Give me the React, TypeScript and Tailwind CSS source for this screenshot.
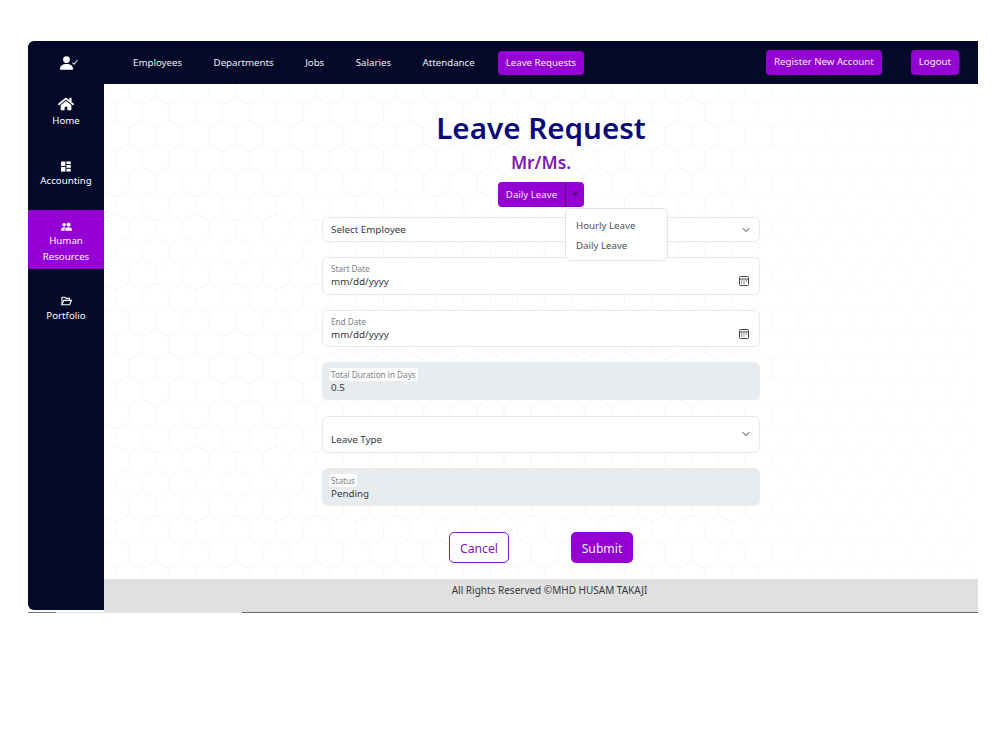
import { ChevronDown } from "lucide-react";
import { BsPeopleFill } from "react-icons/bs";
import { FaHome } from "react-icons/fa";

const TOP_LINKS = ["Employees", "Departments", "Jobs", "Salaries", "Attendance"];

function UserCheckIcon() {
  return (
    <svg width="18" height="14" viewBox="0 0 18 14" fill="white">
      <circle cx="6.5" cy="3.6" r="3.4" />
      <path d="M0 13.2c0-3.6 2.6-5.2 6.5-5.2s6.5 1.6 6.5 5.2c0 .4-.3.6-.7.6H.7c-.4 0-.7-.2-.7-.6Z" />
      <path d="M12.5 6.6l1.6 1.5L17.5 4" fill="none" stroke="#e4e5ec" strokeWidth="1.1" />
    </svg>
  );
}

function AccountingIcon() {
  return (
    <svg width="10" height="11" viewBox="0 0 10 11" fill="white">
      <rect x="0" y="0.5" width="4.4" height="4.6" />
      <rect x="0" y="6" width="4.4" height="4.6" />
      <rect x="5.4" y="0.5" width="4.4" height="2.6" />
      <rect x="5.4" y="4" width="4.4" height="2.8" />
      <rect x="5.4" y="7.8" width="4.4" height="2.8" />
    </svg>
  );
}

function FolderOpenIcon() {
  return (
    <svg width="11" height="10" viewBox="0 0 11 10" fill="none" stroke="white" strokeWidth="1.1">
      <path d="M1 8.8V1.2h3l1 1.2h3.6v1.8" />
      <path d="M1 8.8h7.6l1.8-4.4H2.8Z" />
    </svg>
  );
}

function CalendarIcon() {
  return (
    <svg width="10" height="10" viewBox="0 0 10 10" fill="none" stroke="#3f4347" strokeWidth="1">
      <rect x="0.5" y="0.5" width="9" height="9" rx="1" />
      <path d="M0.5 3h9" />
      <path d="M2 5h1.2M4.4 5h1.2M6.8 5h1.2M2 7h1.2M4.4 7h1.2" />
    </svg>
  );
}

function HexBackground() {
  return (
    <svg
      className="absolute inset-0 h-full w-full [mask-image:linear-gradient(to_right,black_0%,black_70%,rgba(0,0,0,0.35)_85%,rgba(0,0,0,0.2)_100%)]"
      aria-hidden="true"
    >
      <defs>
        <pattern id="hex" width="26.8" height="46.4" patternUnits="userSpaceOnUse" x="-2" y="-10">
          <path
            d="M0 7.7L13.4 0L26.8 7.7V23.2L13.4 30.9L0 23.2ZM13.4 30.9V46.4"
            fill="none"
            stroke="#f7f7f8"
            strokeWidth="1.2"
          />
        </pattern>
      </defs>
      <rect width="100%" height="100%" fill="url(#hex)" />
    </svg>
  );
}

function DateField({ label, short }: { label: string; short?: boolean }) {
  return (
    <div
      className={`flex items-end justify-between rounded-md border border-[#e6e8eb] bg-white pl-2 pr-[10px] ${short ? "h-[37px] pb-[4px]" : "h-[38px] pb-[5px]"}`}
    >
      <div className="flex flex-col">
        <span className="text-[8.2px] leading-[13px] text-[#7b8087]">{label}</span>
        <span className="text-[9.8px] leading-[14px] text-[#33383d]">mm/dd/yyyy</span>
      </div>
      <div className="mb-[3px]">
        <CalendarIcon />
      </div>
    </div>
  );
}

function ReadonlyField({ label, value }: { label: string; value: string }) {
  return (
    <div className="flex h-[38px] flex-col items-start justify-end rounded-md bg-[#e9ecef] pb-[5px] pl-[7px]">
      <span className="rounded-[3px] bg-white px-[2px] text-[8.2px] leading-[13px] text-[#7b8087]">{label}</span>
      <span className="pl-[2px] text-[9.8px] leading-[14px] text-[#33383d]">{value}</span>
    </div>
  );
}

function SideItem({ icon, label, active }: { icon: React.ReactNode; label: React.ReactNode; active?: boolean }) {
  return (
    <div className={`flex flex-col items-center ${active ? "bg-[#9400d3] pb-[5px] pt-[11px]" : ""}`}>
      {icon}
      <div className={`mt-px text-center text-[9.7px] text-white ${active ? "leading-[15.5px]" : "leading-[16px]"}`}>
        {label}
      </div>
    </div>
  );
}

export default function App() {
  return (
    <div
      className="min-h-[750px] bg-white pl-[28px] pt-[41px]"
      style={{ fontFamily: '"Noto Sans", sans-serif' }}
    >
      <div className="w-[950px]">
        <div className="flex h-[43px] items-center rounded-tl-md bg-[#020929] pt-px text-[9.7px] text-[#f1f1f5]">
          <div className="flex w-[76px] justify-center pl-[6px]">
            <UserCheckIcon />
          </div>
          <nav className="ml-[29px] flex items-center gap-[31.5px]">
            {TOP_LINKS.map((link) => (
              <span key={link}>{link}</span>
            ))}
          </nav>
          <span className="ml-[23px] flex h-[24px] items-center rounded-[4px] bg-[#9400d3] px-2">Leave Requests</span>
          <span className="mb-px ml-auto flex h-[25px] items-center rounded-[4px] bg-[#9400d3] px-2">
            Register New Account
          </span>
          <span className="mb-px ml-[29px] mr-[19px] flex h-[25px] items-center rounded-[4px] bg-[#9400d3] px-2">
            Logout
          </span>
        </div>
        <div className="flex h-[528px]">
          <aside className="mb-[2px] flex w-[76px] flex-col rounded-bl-md bg-[#020929] pt-[12px]">
            <SideItem icon={<FaHome className="text-[16px] text-white" />} label="Home" />
            <div className="h-[32px]" />
            <SideItem icon={<AccountingIcon />} label="Accounting" />
            <div className="h-[21px]" />
            <SideItem
              active
              icon={<BsPeopleFill className="text-[11px] text-white" />}
              label={
                <>
                  Human
                  <br />
                  Resources
                </>
              }
            />
            <div className="h-[26px]" />
            <SideItem
              icon={
                <div className="flex h-[12px] items-center">
                  <FolderOpenIcon />
                </div>
              }
              label="Portfolio"
            />
          </aside>
          <main className="flex flex-1 flex-col">
            <div className="relative flex-1 bg-white">
              <HexBackground />
              <div className="relative flex flex-col items-center pt-[22px]">
                <h1 className="text-[29.6px] font-semibold leading-[44px] text-[#0a0a78]">Leave Request</h1>
                <div className="text-[17.4px] font-semibold leading-[24px] text-[#7d16b4]">Mr/Ms.</div>
                <div className="relative mt-[8px] flex h-[25px] w-[86px] rounded-[4px] bg-[#9400d3] text-[9.7px] text-[#f1f1f5]">
                  <span className="flex flex-1 items-center justify-center pt-[2px]">Daily Leave</span>
                  <span className="flex w-[19px] items-center justify-center border-l border-[#5a0a80]">
                    <span className="border-x-[3px] border-t-[3px] border-x-transparent border-t-[#3a0a60]" />
                  </span>
                  <div className="absolute left-[67px] top-[26px] z-10 flex h-[53px] w-[103px] flex-col justify-center gap-[4px] rounded-md border border-[#e3e4e8] bg-white pl-[10px] pt-[3px] text-[#4a4f55]">
                    <span className="leading-[16px]">Hourly Leave</span>
                    <span className="leading-[16px]">Daily Leave</span>
                  </div>
                </div>
                <form className="mt-[10px] flex w-[438px] flex-col gap-[15px]">
                  <div className="flex h-[25px] items-center justify-between rounded-md border border-[#e6e8eb] bg-white pl-2 pr-[7px] pt-px text-[9.8px] text-[#33383d]">
                    Select Employee
                    <ChevronDown className="h-[12px] w-[12px]" />
                  </div>
                  <DateField label="Start Date" />
                  <DateField label="End Date" short />
                  <ReadonlyField label="Total Duration in Days" value="0.5" />
                  <div className="mt-px flex h-[37px] justify-between rounded-md border border-[#e6e8eb] bg-white pl-2 pr-[7px] text-[9.8px] text-[#33383d]">
                    <span className="mt-[16px] leading-[14px]">Leave Type</span>
                    <ChevronDown className="mt-[11px] h-[12px] w-[12px]" />
                  </div>
                  <ReadonlyField label="Status" value="Pending" />
                </form>
                <div className="mt-[26px] flex gap-[62px] text-[12.2px]">
                  <button className="h-[31px] w-[60px] rounded-[5px] border border-[#7d16b4] bg-white pt-[3px] text-[#7d16b4]">
                    Cancel
                  </button>
                  <button className="h-[31px] w-[62px] rounded-[5px] bg-[#9400d3] pt-[3px] text-[#f1f1f5]">Submit</button>
                </div>
              </div>
            </div>
            <footer className="flex h-[33px] justify-center bg-[#e0e0e0] pl-[17px] pt-[3px] text-[10px] leading-[16px] text-[#33383d]">
              All Rights Reserved ©MHD HUSAM TAKAJI
            </footer>
          </main>
        </div>
        <div className="flex h-px">
          <div className="w-[28px] bg-[#777777]" />
          <div className="w-[186px] bg-[#e4e4e4]" />
          <div className="flex-1 bg-[#666666]" />
        </div>
      </div>
    </div>
  );
}
